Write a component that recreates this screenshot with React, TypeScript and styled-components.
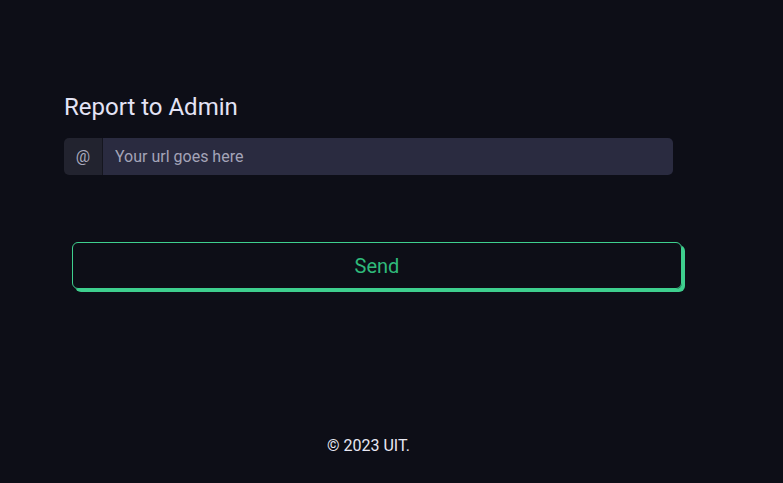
import { createGlobalStyle, styled } from 'styled-components';

const GlobalStyle = createGlobalStyle`
  html, body {
    margin: 0;
    padding: 0;
    background-color: #0d0e17;
    font-family: Roboto, "Liberation Sans", sans-serif;
  }
`;

const Page = styled.div`
  min-height: 483px;
  display: flex;
  flex-direction: column;
`;

const Main = styled.main`
  width: 609px;
  padding: 92px 0 0 64px;
  display: flex;
  flex-direction: column;
`;

const Title = styled.h2`
  margin: 0 0 16px;
  font-size: 24px;
  font-weight: 400;
  line-height: 30px;
  color: #e3e3f5;
`;

const InputGroup = styled.div`
  display: flex;
  height: 37px;
  border-radius: 5px;
  overflow: hidden;
`;

const Addon = styled.span`
  width: 38px;
  display: flex;
  align-items: center;
  justify-content: center;
  background-color: #22232f;
  border-right: 1px solid #15161f;
  color: #a9a9bd;
  font-size: 16px;
`;

const UrlInput = styled.input`
  flex: 1;
  border: none;
  outline: none;
  padding: 0 12px;
  background-color: #2a2b40;
  color: #e3e3f5;
  font-family: inherit;
  font-size: 16px;

  &::placeholder {
    color: #a4a4b8;
  }
`;

const SendButton = styled.button`
  margin: 67px 0 0 8px;
  width: 610px;
  height: 47px;
  border: 1px solid #3ecf8e;
  border-radius: 6px;
  box-shadow: 3px 3px 0 #3ecf8e;
  background-color: transparent;
  color: #2fb97a;
  font-family: inherit;
  font-size: 20px;
  cursor: pointer;
`;

const Footer = styled.footer`
  width: 609px;
  margin-left: 64px;
  margin-top: 147px;
  text-align: center;
  color: #e8e8f3;
  font-size: 16px;
`;

export default function App() {
  return (
    <>
      <GlobalStyle />
      <Page>
        <Main>
          <Title>Report to Admin</Title>
          <InputGroup>
            <Addon>@</Addon>
            <UrlInput placeholder="Your url goes here" />
          </InputGroup>
          <SendButton>Send</SendButton>
        </Main>
        <Footer>© 2023 UIT.</Footer>
      </Page>
    </>
  );
}
